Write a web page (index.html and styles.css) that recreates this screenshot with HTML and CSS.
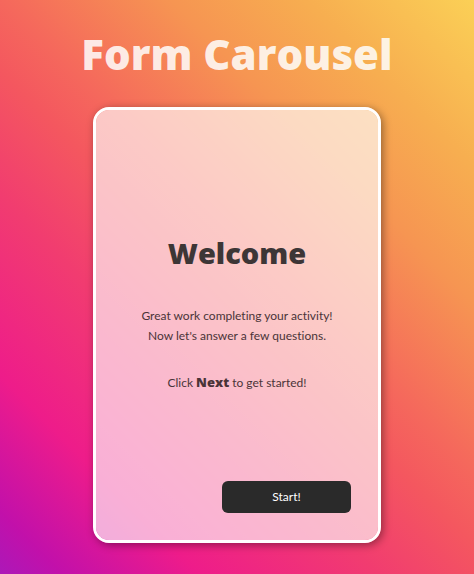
FILE: index.html
```html
<!DOCTYPE html>
<html lang="en">
<head>
    <meta charset="UTF-8">
    <meta name="viewport" content="width=device-width, initial-scale=1.0">
    <title>Form Carousel</title>
    <link rel="stylesheet" href="styles.css">
</head>
<body>
    <h1>Form Carousel</h1>

    <form class="card">
        <!-- Welcome slide -->
        <div class="slide">
            <h2>Welcome</h2>
            <p>Great work completing your activity!<br>Now let's answer a few questions.</p>
            <p>Click <strong>Next</strong> to get started!</p>
        </div>

        <div class="buttons">
            <button type="button" class="btn">Start!</button>
        </div>
    </form>
</body>
</html>
```

FILE: styles.css
```css
* {
    box-sizing: border-box;
}

body {
    font-family: "Gill Sans", Lato, sans-serif;
    font-variant-ligatures: none;
    display: flex;
    flex-direction: column;
    align-items: center;
    min-height: 100vh;
    margin: 0;
    padding: 24px 16px 31px;
    color: #4a3438;
    background: linear-gradient(45deg, #ac18b8 0%, #c210aa 6%, #ee1c8a 19%, #f13c70 36%, #f4575f 48%, #f5685c 55%, #f69552 71%, #f7ae50 84%, #fbd056 100%);
}

h1, h2, strong {
    font-family: "Gill Sans", "Open Sans", sans-serif;
    font-weight: 800;
}

h1 {
    margin: 0 0 23px;
    font-size: 42px;
    line-height: 60px;
    text-align: center;
    color: rgba(255, 255, 255, 0.85);
}

.card {
    flex: 1;
    display: flex;
    flex-direction: column;
    width: 100%;
    max-width: 288px;
    padding: 27px;
    border: 3px solid #fff;
    border-radius: 16px;
    background: rgba(255, 255, 255, 0.65);
    background-clip: padding-box;
    box-shadow: 2px 2px 8px rgba(0, 0, 0, 0.4);
}

.slide {
    flex: 1;
    display: flex;
    flex-direction: column;
    justify-content: center;
    padding-top: 34px;
    text-align: center;
}

h2 {
    margin: 0 0 34px;
    font-size: 29px;
    line-height: 38px;
    color: #3d3636;
}

p {
    margin: 0 0 26px;
    font-size: 12px;
    line-height: 20px;
}

strong {
    font-size: 13px;
}

.buttons {
    display: flex;
    justify-content: flex-end;
}

.btn {
    width: 129px;
    padding: 6px;
    border: none;
    border-radius: 6px;
    font-family: inherit;
    font-size: 12px;
    line-height: 20px;
    color: #fff;
    background-color: #2a2a2a;
    cursor: pointer;
}
```
